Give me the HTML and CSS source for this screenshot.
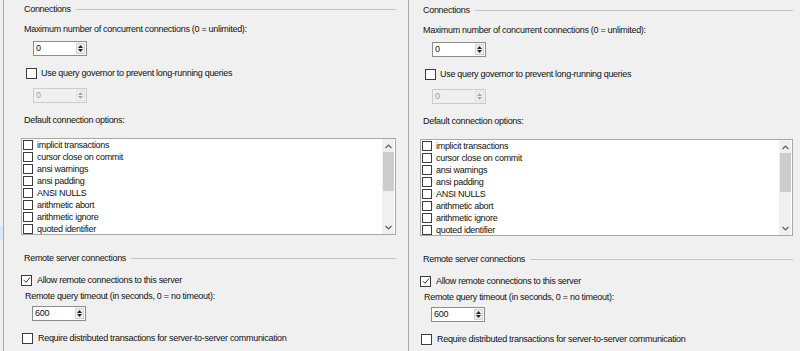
FILE: index.html
```html
<!DOCTYPE html>
<html>
<head>
<meta charset="utf-8">
<link rel="stylesheet" href="styles.css">
</head>
<body>
<div class="pane pane-left">
  <div class="gutter"><div class="gutter-mark"></div></div>
  <div class="frame">
    <div class="group">Connections</div>
    <div class="label l-max">Maximum number of concurrent connections (0 = unlimited):</div>
    <div class="spin s-max"><div class="spin-val">0</div><div class="spin-btn"><svg width="5" height="3" viewBox="0 0 5 3"><path d="M2.5 0L5 3H0z"/></svg><svg width="5" height="3" viewBox="0 0 5 3"><path d="M0 0H5L2.5 3z"/></svg></div></div>
    <div class="check c-gov"><span class="box"></span><span class="ctext">Use query governor to prevent long-running queries</span></div>
    <div class="spin disabled s-gov"><div class="spin-val">0</div><div class="spin-btn"><svg width="5" height="3" viewBox="0 0 5 3"><path d="M2.5 0L5 3H0z"/></svg><svg width="5" height="3" viewBox="0 0 5 3"><path d="M0 0H5L2.5 3z"/></svg></div></div>
    <div class="label l-def">Default connection options:</div>
    <div class="listbox">
      <div class="items">
        <div class="item"><span class="box"></span>implicit transactions</div>
        <div class="item"><span class="box"></span>cursor close on commit</div>
        <div class="item"><span class="box"></span>ansi warnings</div>
        <div class="item"><span class="box"></span>ansi padding</div>
        <div class="item"><span class="box"></span>ANSI NULLS</div>
        <div class="item"><span class="box"></span>arithmetic abort</div>
        <div class="item"><span class="box"></span>arithmetic ignore</div>
        <div class="item"><span class="box"></span>quoted identifier</div>
      </div>
      <div class="scroll">
        <svg class="arrow" width="7" height="5" viewBox="0 0 7 5"><path d="M0.5 4L3.5 1L6.5 4" fill="none" stroke="#606060" stroke-width="1.2"/></svg>
        <div class="thumb"></div>
        <svg class="arrow down" width="7" height="5" viewBox="0 0 7 5"><path d="M0.5 1L3.5 4L6.5 1" fill="none" stroke="#606060" stroke-width="1.2"/></svg>
      </div>
    </div>
    <div class="group g-remote">Remote server connections</div>
    <div class="check c-allow"><span class="box checked"><svg width="8" height="8" viewBox="0 0 8 8"><path d="M1 4.2L3 6.3L7 1.5" fill="none" stroke="#333" stroke-width="1"/></svg></span><span class="ctext">Allow remote connections to this server</span></div>
    <div class="label l-timeout">Remote query timeout (in seconds, 0 = no timeout):</div>
    <div class="spin s-timeout"><div class="spin-val">600</div><div class="spin-btn"><svg width="5" height="3" viewBox="0 0 5 3"><path d="M2.5 0L5 3H0z"/></svg><svg width="5" height="3" viewBox="0 0 5 3"><path d="M0 0H5L2.5 3z"/></svg></div></div>
    <div class="check c-req"><span class="box"></span><span class="ctext">Require distributed transactions for server-to-server communication</span></div>
  </div>
</div>
<div class="pane pane-right">
  <div class="frame">
    <div class="group">Connections</div>
    <div class="label l-max">Maximum number of concurrent connections (0 = unlimited):</div>
    <div class="spin s-max"><div class="spin-val">0</div><div class="spin-btn"><svg width="5" height="3" viewBox="0 0 5 3"><path d="M2.5 0L5 3H0z"/></svg><svg width="5" height="3" viewBox="0 0 5 3"><path d="M0 0H5L2.5 3z"/></svg></div></div>
    <div class="check c-gov"><span class="box"></span><span class="ctext">Use query governor to prevent long-running queries</span></div>
    <div class="spin disabled s-gov"><div class="spin-val">0</div><div class="spin-btn"><svg width="5" height="3" viewBox="0 0 5 3"><path d="M2.5 0L5 3H0z"/></svg><svg width="5" height="3" viewBox="0 0 5 3"><path d="M0 0H5L2.5 3z"/></svg></div></div>
    <div class="label l-def">Default connection options:</div>
    <div class="listbox">
      <div class="items">
        <div class="item"><span class="box"></span>implicit transactions</div>
        <div class="item"><span class="box"></span>cursor close on commit</div>
        <div class="item"><span class="box"></span>ansi warnings</div>
        <div class="item"><span class="box"></span>ansi padding</div>
        <div class="item"><span class="box"></span>ANSI NULLS</div>
        <div class="item"><span class="box"></span>arithmetic abort</div>
        <div class="item"><span class="box"></span>arithmetic ignore</div>
        <div class="item"><span class="box"></span>quoted identifier</div>
      </div>
      <div class="scroll">
        <svg class="arrow" width="7" height="5" viewBox="0 0 7 5"><path d="M0.5 4L3.5 1L6.5 4" fill="none" stroke="#606060" stroke-width="1.2"/></svg>
        <div class="thumb"></div>
        <svg class="arrow down" width="7" height="5" viewBox="0 0 7 5"><path d="M0.5 1L3.5 4L6.5 1" fill="none" stroke="#606060" stroke-width="1.2"/></svg>
      </div>
    </div>
    <div class="group g-remote">Remote server connections</div>
    <div class="check c-allow"><span class="box checked"><svg width="8" height="8" viewBox="0 0 8 8"><path d="M1 4.2L3 6.3L7 1.5" fill="none" stroke="#333" stroke-width="1"/></svg></span><span class="ctext">Allow remote connections to this server</span></div>
    <div class="label l-timeout">Remote query timeout (in seconds, 0 = no timeout):</div>
    <div class="spin s-timeout"><div class="spin-val">600</div><div class="spin-btn"><svg width="5" height="3" viewBox="0 0 5 3"><path d="M2.5 0L5 3H0z"/></svg><svg width="5" height="3" viewBox="0 0 5 3"><path d="M0 0H5L2.5 3z"/></svg></div></div>
    <div class="check c-req"><span class="box"></span><span class="ctext">Require distributed transactions for server-to-server communication</span></div>
  </div>
</div>
</body>
</html>
```

FILE: styles.css
```css
* { box-sizing: border-box; }
html, body { margin: 0; }
body {
  width: 800px;
  height: 351px;
  overflow: hidden;
  background: #f0f0f0;
  display: flex;
  font-family: "Liberation Sans", Arial, sans-serif;
  font-size: 9px;
  letter-spacing: -0.3px;
  color: #111;
}
.pane { display: flex; height: 351px; }
.pane-left { width: 408px; }
.pane-right { width: 392px; }
.gutter { width: 3px; display: flex; flex-direction: column; }
.gutter-mark { margin-top: 226px; height: 14px; background: #d8e8f8; }
.frame {
  flex: 1;
  border-left: 1px solid #a8a8a8;
  display: flex;
  flex-direction: column;
}
.pane-left .frame { padding: 0 12px 0 17px; }
.pane-right .frame { padding: 1px 7px 0 11px; }

.group {
  display: flex;
  align-items: center;
  height: 17px;
  padding-left: 3px;
  white-space: nowrap;
}
.group::after {
  content: "";
  flex: 1;
  border-top: 1px solid #c4c4c4;
  margin-left: 5px;
  margin-top: 1px;
}
.g-remote { margin-top: 15px; height: 16px; }

.label { height: 14px; line-height: 14px; padding-left: 3px; white-space: nowrap; }
.l-max { margin-top: 5px; }
.l-def { margin-top: 10px; }
.l-timeout { margin-top: 2px; padding-left: 4px; }

.spin {
  display: flex;
  width: 54px;
  height: 15px;
  border: 1px solid #8c8c8c;
  background: #fff;
  margin-left: 12px;
}
.spin-val { flex: 1; padding-left: 2px; line-height: 13px; }
.spin-btn {
  width: 9px;
  margin: 1px 1px 1px 0;
  background: #ececec;
  border: 1px solid #d4d4d4;
  display: flex;
  flex-direction: column;
  align-items: center;
  justify-content: center;
  gap: 1px;
}
.spin-btn svg { display: block; fill: #222; }
.spin.disabled { border-color: #cccccc; background: #f0f0f0; }
.spin.disabled .spin-val { color: #a0a0a0; }
.spin.disabled .spin-btn { background: #f0f0f0; border-color: #e0e0e0; }
.spin.disabled .spin-btn svg { fill: #a8a8a8; }
.s-max { margin-top: 5px; }
.s-gov { margin-top: 8px; }
.s-timeout { margin-top: 3px; margin-left: 11px; }

.check { display: flex; align-items: center; height: 14px; white-space: nowrap; }
.box {
  width: 10px;
  height: 10px;
  border: 1px solid #3c3c3c;
  background: #fff;
  flex: none;
  display: flex;
  align-items: center;
  justify-content: center;
}
.check .box { width: 11px; height: 11px; }
.ctext { margin-left: 5px; }
.c-gov { margin-top: 10px; padding-left: 5px; }
.c-gov .ctext { margin-left: 4px; }
.c-allow { margin-top: 7px; padding-left: 0; }
.c-req { margin-top: 10px; padding-left: 1px; }

.listbox {
  margin-top: 11px;
  height: 97px;
  border: 1px solid #a8a8a8;
  background: #fff;
  display: flex;
}
.items { flex: 1; padding-left: 1px; }
.item { display: flex; align-items: center; height: 12px; white-space: nowrap; }
.item .box { margin-right: 4px; }
.scroll {
  width: 12px;
  background: #f0f0f0;
  display: flex;
  flex-direction: column;
  align-items: center;
  margin-right: 1px;
}
.arrow { display: block; margin-top: 5px; }
.thumb { width: 11px; height: 39px; background: #cdcdcd; margin-top: 3px; }
.arrow.down { margin-top: auto; margin-bottom: 4px; }
```
